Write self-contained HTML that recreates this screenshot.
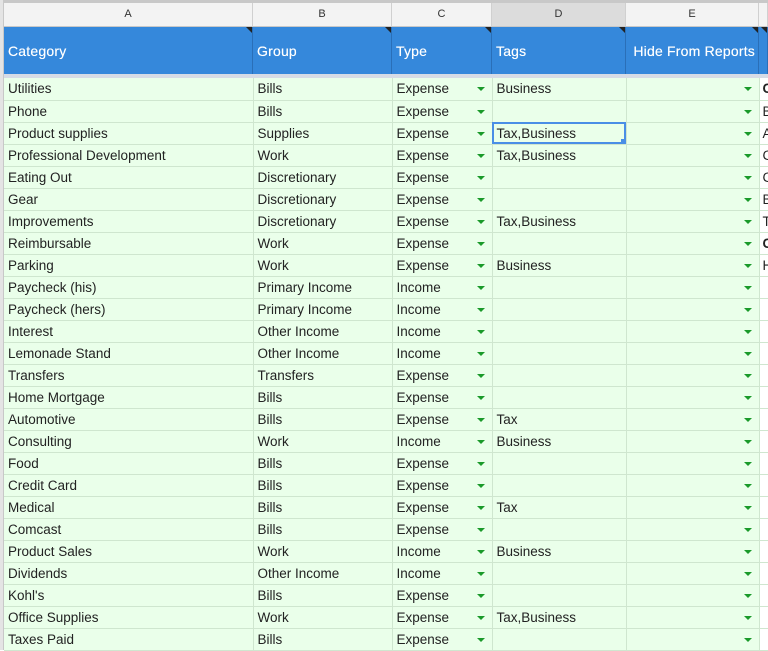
<!DOCTYPE html>
<html><head><meta charset="utf-8"><style>
*{margin:0;padding:0;box-sizing:border-box}
body{width:768px;height:650px;overflow:hidden;background:#fff;font-family:"Liberation Sans",sans-serif;position:relative}
.top{position:absolute;left:0;top:0;width:768px;height:3px;background:#c8c8c8}
.gut{position:absolute;left:0;top:0;width:4px;height:650px;background:#e4e4e4;border-right:1px solid #c8c8c8}
.ch{position:absolute;top:3px;height:24px;background:#f3f3f3;border-right:1px solid #d0d0d0;border-bottom:1px solid #c8c8c8;font-size:11px;color:#333;text-align:center;line-height:23px}
.hd{position:absolute;top:27px;height:47px;background:#3588db;border-right:1px solid #2a6fb8;color:#fff;font-size:14px;line-height:48px;padding-left:4px;white-space:nowrap;overflow:hidden;letter-spacing:0.2px;text-shadow:0 0 0.4px #fff}
.hd:after{content:"";position:absolute;right:0;top:0;border-top:6px solid #222;border-left:6px solid transparent}
.band{position:absolute;top:74px;left:4px;width:764px;height:4px;background:#d6dce6}
table{position:absolute;left:4px;top:78px;width:764px;border-collapse:collapse;table-layout:fixed}
td{height:22px;border-right:1px solid #cfe6cf;border-bottom:1px solid #cfe6cf;background:#eaffea;font-size:13.5px;color:#222;padding-left:4px;white-space:nowrap;overflow:hidden;position:relative;line-height:21px}
td.f{background:#fff;border-right:none;padding-left:3px}
.a:after{content:"";position:absolute;right:7px;top:9px;border-top:4px solid #1a9a2a;border-left:4px solid transparent;border-right:4px solid transparent}
.sel{outline:2px solid #4a8ee6;outline-offset:-2px}
.sel:before{content:"";position:absolute;right:-1px;bottom:-1px;width:6px;height:6px;background:#4a8ee6}
</style></head><body>
<div class="top"></div><div class="gut"></div>
<div class="ch" style="left:4px;width:249px">A</div>
<div class="ch" style="left:253px;width:139px">B</div>
<div class="ch" style="left:392px;width:100px">C</div>
<div class="ch" style="left:492px;width:134px;background:#dcdcdc">D</div>
<div class="ch" style="left:626px;width:133px">E</div>
<div class="ch" style="left:759px;width:9px"></div>
<div class="hd" style="left:4px;width:249px">Category</div>
<div class="hd" style="left:253px;width:139px">Group</div>
<div class="hd" style="left:392px;width:100px">Type</div>
<div class="hd" style="left:492px;width:134px">Tags</div>
<div class="hd" style="left:626px;width:133px;text-align:right;padding-right:3px;padding-left:0">Hide From Reports</div>
<div class="hd" style="left:759px;width:9px"></div>
<div class="band"></div>
<table>
<colgroup><col style="width:249px"><col style="width:139px"><col style="width:100px"><col style="width:134px"><col style="width:133px"><col style="width:9px"></colgroup>
<tr><td>Utilities</td><td>Bills</td><td class="a">Expense</td><td>Business</td><td class="a"></td><td class="f"><b>C</b></td></tr>
<tr><td>Phone</td><td>Bills</td><td class="a">Expense</td><td></td><td class="a"></td><td class="f">B</td></tr>
<tr><td>Product supplies</td><td>Supplies</td><td class="a">Expense</td><td class="sel">Tax,Business</td><td class="a"></td><td class="f">A</td></tr>
<tr><td>Professional Development</td><td>Work</td><td class="a">Expense</td><td>Tax,Business</td><td class="a"></td><td class="f">C</td></tr>
<tr><td>Eating Out</td><td>Discretionary</td><td class="a">Expense</td><td></td><td class="a"></td><td class="f">C</td></tr>
<tr><td>Gear</td><td>Discretionary</td><td class="a">Expense</td><td></td><td class="a"></td><td class="f">B</td></tr>
<tr><td>Improvements</td><td>Discretionary</td><td class="a">Expense</td><td>Tax,Business</td><td class="a"></td><td class="f">T</td></tr>
<tr><td>Reimbursable</td><td>Work</td><td class="a">Expense</td><td></td><td class="a"></td><td class="f"><b>C</b></td></tr>
<tr><td>Parking</td><td>Work</td><td class="a">Expense</td><td>Business</td><td class="a"></td><td class="f">H</td></tr>
<tr><td>Paycheck (his)</td><td>Primary Income</td><td class="a">Income</td><td></td><td class="a"></td><td class="f"></td></tr>
<tr><td>Paycheck (hers)</td><td>Primary Income</td><td class="a">Income</td><td></td><td class="a"></td><td class="f"></td></tr>
<tr><td>Interest</td><td>Other Income</td><td class="a">Income</td><td></td><td class="a"></td><td class="f"></td></tr>
<tr><td>Lemonade Stand</td><td>Other Income</td><td class="a">Income</td><td></td><td class="a"></td><td class="f"></td></tr>
<tr><td>Transfers</td><td>Transfers</td><td class="a">Expense</td><td></td><td class="a"></td><td class="f"></td></tr>
<tr><td>Home Mortgage</td><td>Bills</td><td class="a">Expense</td><td></td><td class="a"></td><td class="f"></td></tr>
<tr><td>Automotive</td><td>Bills</td><td class="a">Expense</td><td>Tax</td><td class="a"></td><td class="f"></td></tr>
<tr><td>Consulting</td><td>Work</td><td class="a">Income</td><td>Business</td><td class="a"></td><td class="f"></td></tr>
<tr><td>Food</td><td>Bills</td><td class="a">Expense</td><td></td><td class="a"></td><td class="f"></td></tr>
<tr><td>Credit Card</td><td>Bills</td><td class="a">Expense</td><td></td><td class="a"></td><td class="f"></td></tr>
<tr><td>Medical</td><td>Bills</td><td class="a">Expense</td><td>Tax</td><td class="a"></td><td class="f"></td></tr>
<tr><td>Comcast</td><td>Bills</td><td class="a">Expense</td><td></td><td class="a"></td><td class="f"></td></tr>
<tr><td>Product Sales</td><td>Work</td><td class="a">Income</td><td>Business</td><td class="a"></td><td class="f"></td></tr>
<tr><td>Dividends</td><td>Other Income</td><td class="a">Income</td><td></td><td class="a"></td><td class="f"></td></tr>
<tr><td>Kohl's</td><td>Bills</td><td class="a">Expense</td><td></td><td class="a"></td><td class="f"></td></tr>
<tr><td>Office Supplies</td><td>Work</td><td class="a">Expense</td><td>Tax,Business</td><td class="a"></td><td class="f"></td></tr>
<tr><td>Taxes Paid</td><td>Bills</td><td class="a">Expense</td><td></td><td class="a"></td><td class="f"></td></tr>
</table>
</body></html>
